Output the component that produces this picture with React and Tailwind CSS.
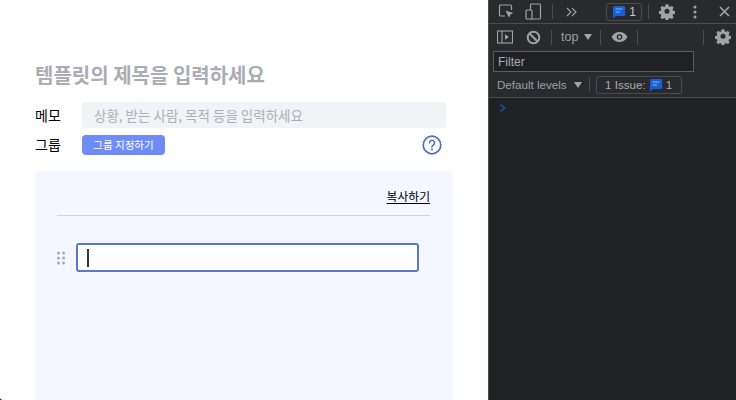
import React from 'react';

const sans = { fontFamily: '"Noto Sans CJK KR", "Noto Sans", sans-serif' };

function Msg({ className = '' }) {
  return (
    <svg width="14" height="14" viewBox="0 0 14 14" className={className}>
      <path d="M2 1h10a1.2 1.2 0 0 1 1.2 1.2v7.6A1.2 1.2 0 0 1 12 11H4l-3 2.4V2.2A1.2 1.2 0 0 1 2 1z" fill="#1a5fd0" />
      <path d="M3.5 4h7M3.5 7h4.5" stroke="#8ab4f8" strokeWidth="1.2" />
    </svg>
  );
}

function Gear({ size = 16 }) {
  return (
    <svg width={size} height={size} viewBox="0 0 24 24" fill="#a0a3a8">
      <path fillRule="evenodd" d="M10 1.5h4l.6 3 2 .9 2.6-1.7 2.8 2.8-1.7 2.6.9 2 3 .6v4l-3 .6-.9 2 1.7 2.6-2.8 2.8-2.6-1.7-2 .9-.6 3h-4l-.6-3-2-.9-2.6 1.7-2.8-2.8 1.7-2.6-.9-2-3-.6v-4l3-.6.9-2-1.7-2.6 2.8-2.8 2.6 1.7 2-.9zM12 8.2a3.8 3.8 0 1 0 0 7.6 3.8 3.8 0 0 0 0-7.6z" transform="translate(0 -1)" />
    </svg>
  );
}

function Divider() {
  return <div className="w-px h-[15px] bg-[#4b4d50]" />;
}

function Caret() {
  return <div className="w-0 h-0 border-l-[4px] border-r-[4px] border-t-[6px] border-l-transparent border-r-transparent border-t-[#a0a3a8]" />;
}

function DevTools() {
  return (
    <div className="w-[248px] shrink-0 h-full bg-[#202124] border-l border-[#4a4c4f] text-[#9aa0a6] text-[11.600px]" style={{ fontFamily: '"Liberation Sans", sans-serif' }}>
      <div className="h-6 bg-[#292a2d] border-b border-[#4a4c4f] flex items-center pl-[9px]">
        <svg width="17" height="17" viewBox="0 0 17 17" fill="none" stroke="#a0a3a8" strokeWidth="1.2">
          <path d="M7 13H2.5a1 1 0 0 1-1-1V3a1 1 0 0 1 1-1h10a1 1 0 0 1 1 1v4" />
          <path d="M7.5 7.5l8 2.6-3.2 1.3-1.3 3.4z" fill="#a0a3a8" stroke="none" />
        </svg>
        <svg width="17" height="17" viewBox="0 0 17 17" fill="none" stroke="#a0a3a8" strokeWidth="1.2" className="ml-[10px]">
          <rect x="5.5" y="1" width="10" height="15" rx="1" />
          <rect x="1" y="7" width="6" height="9" rx="1" fill="#292a2d" />
        </svg>
        <div className="ml-[10px]"><Divider /></div>
        <svg width="12" height="10" viewBox="0 0 12 10" fill="none" stroke="#a0a3a8" strokeWidth="1.1" className="ml-[13px]">
          <path d="M1 1l4 4-4 4M6 1l4 4-4 4" />
        </svg>
        <div className="ml-[28px] w-[36px] h-[18px] rounded-[3px] border border-[#4a4c4f] flex items-center justify-center gap-[3px] text-[12px] text-[#c4c7cc]">
          <Msg /><span>1</span>
        </div>
        <div className="ml-[6px]"><Divider /></div>
        <div className="ml-[10px]"><Gear /></div>
        <svg width="4" height="14" viewBox="0 0 4 14" fill="#a0a3a8" className="ml-[18px]">
          <circle cx="2" cy="2" r="1.5" /><circle cx="2" cy="7" r="1.5" /><circle cx="2" cy="12" r="1.5" />
        </svg>
        <svg width="11" height="11" viewBox="0 0 11 11" stroke="#a0a3a8" strokeWidth="1.6" className="ml-[22px]">
          <path d="M1 1l9 9M10 1l-9 9" />
        </svg>
      </div>
      <div className="h-[26px] bg-[#292a2d] flex items-center pl-[8px]">
        <svg width="16" height="14" viewBox="0 0 16 14" fill="none" stroke="#a0a3a8" strokeWidth="1.1">
          <rect x="0.5" y="1" width="15" height="12" />
          <path d="M5 1v12" />
          <path d="M8 4.2l4 2.8-4 2.8z" fill="#a0a3a8" stroke="none" />
        </svg>
        <svg width="15" height="15" viewBox="0 0 15 15" fill="none" stroke="#a0a3a8" strokeWidth="2" className="ml-[13px]">
          <circle cx="7.5" cy="7.5" r="5.8" />
          <path d="M3.5 3.5l8 8" />
        </svg>
        <div className="ml-[10px]"><Divider /></div>
        <span className="ml-[9px] text-[12.500px]">top</span>
        <div className="ml-[6px]"><Caret /></div>
        <div className="ml-[8px]"><Divider /></div>
        <svg width="17" height="12" viewBox="0 0 17 12" className="ml-[10px]">
          <path d="M.5 6C2.5 2.5 5 1 8.500 1s6 1.500 8 5c-2 3.500-4.500 5-8 5s-6-1.500-8-5z" fill="#a0a3a8" />
          <circle cx="8.500" cy="6" r="2.800" fill="#292a2d" />
          <circle cx="8.500" cy="6" r="1.500" fill="#a0a3a8" />
        </svg>
        <div className="ml-[9px]"><Divider /></div>
        <div className="ml-[65px]"><Divider /></div>
        <div className="ml-[11px]"><Gear /></div>
      </div>
      <div className="bg-[#292a2d] pl-[4px] pt-[1px]">
        <div className="w-[201px] h-[21px] bg-[#202124] border border-[#5a5c5f] flex items-center pl-[4px] text-[12px] text-[#a9acb0]">Filter</div>
      </div>
      <div className="h-[26px] bg-[#292a2d] border-b border-[#4a4c4f] flex items-center pl-[8px]">
        <span>Default levels</span>
        <div className="ml-[7px]"><Caret /></div>
        <div className="ml-[7px]"><Divider /></div>
        <div className="ml-[6px] w-[86px] h-[18px] rounded-[2px] border border-[#4a4c4f] flex items-center justify-center gap-[3px] text-[#a9acb0]">
          <span>1 Issue:</span><Msg /><span>1</span>
        </div>
      </div>
      <div className="pl-[10px] pt-[5px]">
        <svg width="8" height="10" viewBox="0 0 8 10" fill="none" stroke="#1c53b0" strokeWidth="1.600">
          <path d="M1.500 1.500l4 3.500-4 3.500" />
        </svg>
      </div>
    </div>
  );
}

function Editor() {
  return (
    <div className="flex-1 min-w-0 h-full bg-white rounded-bl-[3px] pl-[35px] pr-[35px] text-black overflow-hidden" style={sans}>
      <h1 className="mt-[60px] h-[30px] leading-[30px] text-[20px] font-bold text-[#a9adb3]">템플릿의 제목을 입력하세요</h1>
      <div className="mt-[12px] flex items-center pr-[7px]">
        <span className="w-[47px] text-[14px]">메모</span>
        <div className="flex-1 h-[26px] bg-[#f1f3f6] rounded-[2px] pl-[12px] flex items-center text-[13.500px] text-[#a9b0b8]">상황, 받는 사람, 목적 등을 입력하세요</div>
      </div>
      <div className="mt-[6px] flex items-center pr-[11px]">
        <span className="w-[47px] text-[14px]">그룹</span>
        <button className="w-[83px] h-[20px] rounded-[4px] bg-[#6f8cf6] text-white text-[10.500px] flex items-center justify-center">그룹 지정하기</button>
        <svg width="20" height="20" viewBox="0 0 20 20" fill="none" className="ml-auto">
          <circle cx="10" cy="10" r="8.800" stroke="#4f6fc0" strokeWidth="1.700" />
          <path d="M7.500 7.800a2.500 2.500 0 1 1 3.900 2.100c-.9.600-1.400 1-1.400 2" stroke="#4f6fc0" strokeWidth="1.600" strokeLinecap="round" />
          <circle cx="10" cy="14.400" r="1" fill="#4f6fc0" />
        </svg>
      </div>
      <div className="mt-[16px] h-[229px] bg-[#f4f7ff] rounded-t-[2px] pl-[22px] pr-[23px]">
        <div className="h-[45px] border-b border-[#cfd6e2] flex justify-end items-end pb-[11px]">
          <span className="text-[11.800px] leading-[16px] underline underline-offset-2">복사하기</span>
        </div>
        <div className="mt-[27px] flex items-center">
          <svg width="8" height="14" viewBox="0 0 8 14" fill="#a5a8ae" className="shrink-0">
            <circle cx="1.500" cy="2" r="1.500" /><circle cx="6.500" cy="2" r="1.500" />
            <circle cx="1.500" cy="7" r="1.500" /><circle cx="6.500" cy="7" r="1.500" />
            <circle cx="1.500" cy="12" r="1.500" /><circle cx="6.500" cy="12" r="1.500" />
          </svg>
          <div className="ml-[11px] mr-[11px] flex-1 h-[29px] bg-white border-2 border-[#5b76d0] rounded-[3px] flex items-center pl-[9px]">
            <div className="w-[2px] h-[18px] bg-[#333]" />
          </div>
        </div>
      </div>
    </div>
  );
}

export default function App() {
  return (
    <div className="w-[736px] h-[400px] flex overflow-hidden bg-[#202124]">
      <Editor />
      <DevTools />
    </div>
  );
}
